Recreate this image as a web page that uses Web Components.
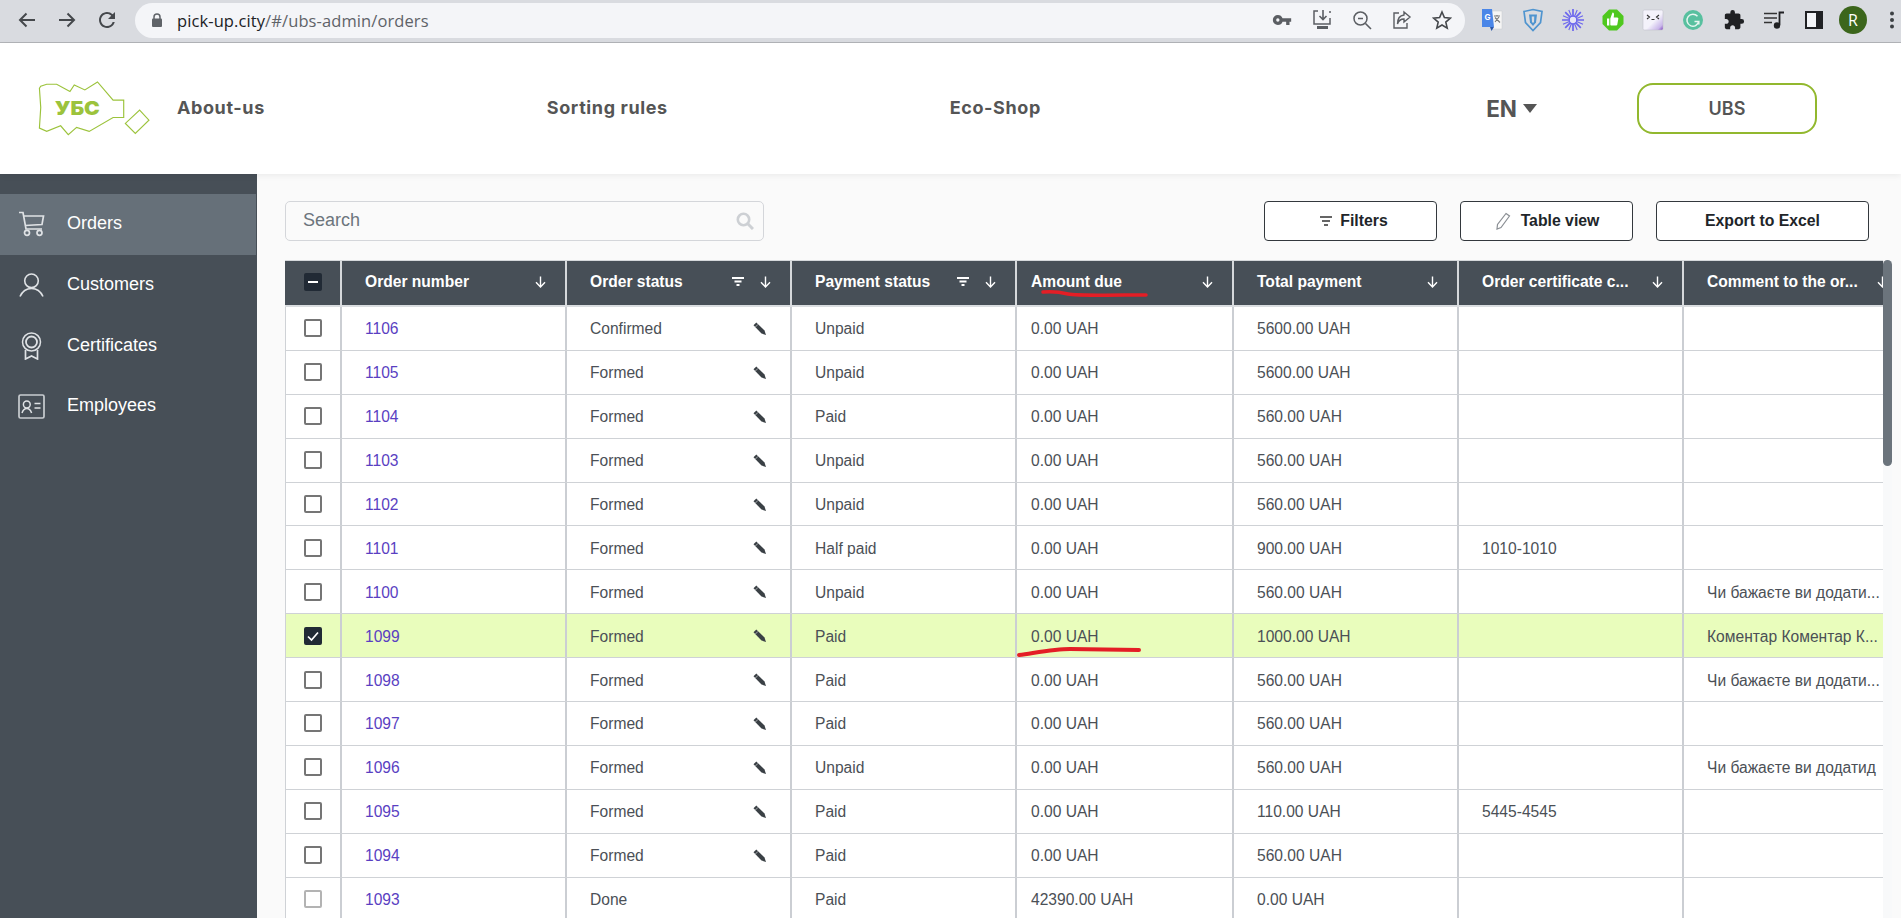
<!DOCTYPE html>
<html lang="en">
<head>
<meta charset="utf-8">
<title>UBS admin orders</title>
<style>
    html, body { margin: 0; height: 918px; overflow: hidden; background: #fafafa; }
    body { display: flex; flex-direction: column; font-family: "Liberation Sans", Arial, sans-serif; }
</style>
</head>
<body>
<browser-bar url-host="pick-up.city" url-path="/#/ubs-admin/orders"></browser-bar>
<site-header></site-header>
<admin-page>
    <side-nav slot="nav">
        <nav-item icon="cart" active>Orders</nav-item>
        <nav-item icon="user">Customers</nav-item>
        <nav-item icon="badge">Certificates</nav-item>
        <nav-item icon="card">Employees</nav-item>
    </side-nav>
    <order-toolbar>
        <search-box placeholder="Search"></search-box>
        <tool-button slot="actions" icon="lines">Filters</tool-button>
        <tool-button slot="actions" icon="pen">Table view</tool-button>
        <tool-button slot="actions" wide>Export to Excel</tool-button>
    </order-toolbar>
    <order-table></order-table>
</admin-page>

<script>
const svg = (w, h, box, body, extra = '') =>
    `<svg width="${w}" height="${h}" viewBox="${box}" fill="none" aria-hidden="true" ${extra}>${body}</svg>`;

// иконки браузера
const CHROME_ICONS = {
    back: svg(24, 24, '0 0 24 24', '<path d="M20 12H5M11.5 5.5 5 12l6.5 6.5" stroke="#45484c" stroke-width="2"/>'),
    forward: svg(24, 24, '0 0 24 24', '<path d="M4 12h15M12.5 5.5 19 12l-6.5 6.5" stroke="#45484c" stroke-width="2"/>'),
    reload: svg(24, 24, '0 0 24 24', '<path fill="#45484c" d="M17.65 6.35A7.958 7.958 0 0 0 12 4c-4.42 0-7.99 3.58-7.99 8s3.57 8 7.99 8c3.73 0 6.84-2.55 7.73-6h-2.08A5.99 5.99 0 0 1 12 18c-3.31 0-6-2.69-6-6s2.69-6 6-6c1.66 0 3.14.69 4.22 1.78L13 11h7V4l-2.35 2.35z"/>'),
    lock: svg(12, 14, '0 0 12 14', '<path d="M3 6V4a3 3 0 0 1 6 0v2" stroke="#5f6368" stroke-width="1.5"/><rect x="1" y="5.5" width="10" height="8.5" rx="1" fill="#5f6368"/>'),
    key: svg(20, 20, '0 0 24 24', '<path fill="#5b5e63" d="M12.65 10A6 6 0 0 0 7 6a6 6 0 0 0 0 12 6 6 0 0 0 5.65-4H17v4h4v-4h2v-4H12.65zM7 14a2 2 0 1 1 0-4 2 2 0 0 1 0 4z"/>'),
    install: svg(20, 22, '0 0 20 22', '<path d="M6 2H2v13h16V9M18 2v2" stroke="#5b5e63" stroke-width="1.5"/><path d="M11 1v9M7.5 7l3.5 3.5L14.500 7" stroke="#5b5e63" stroke-width="1.6"/><rect x="5" y="17" width="11" height="3" fill="#5b5e63"/>'),
    zoom: svg(20, 20, '0 0 20 20', '<circle cx="8.500" cy="8.500" r="6.500" stroke="#5b5e63" stroke-width="1.5"/><path d="M13.500 13.500 19 19M6 8.500h5" stroke="#5b5e63" stroke-width="1.6"/>'),
    share: svg(20, 20, '0 0 20 20', '<path d="M7 3H2v15h13v-5" stroke="#5b5e63" stroke-width="1.4"/><path d="M12 2l6 5-6 5V9C8 9 6.500 11 5.500 14 5.500 9 8 5.500 12 5z" stroke="#5b5e63" stroke-width="1.4"/>'),
    star: svg(20, 20, '0 0 20 20', '<path d="M10 2l2.400 5.600 6 .5-4.600 4 1.400 6L10 15l-5.200 3.100 1.400-6-4.600-4 6-.5z" stroke="#45484c" stroke-width="1.600"/>'),
    translate: svg(24, 26, '0 0 24 26', '<rect x="11" y="4" width="11" height="18" fill="#f5f5f5" stroke="#c8cacd" stroke-width=".5"/><path d="M14 9h6M17 8v1.500M15 15l4-5M15 10.500l5 5" stroke="#777" stroke-width="1.100"/><path d="M2 2h10l2 18H2z" fill="#4a86e8"/><path d="M10 20h4l-2.500 4z" fill="#2a56a8"/><text x="4.500" y="13" font-family="Inter, sans-serif" font-size="8" font-weight="700" fill="#fff">G</text>'),
    shield: svg(22, 24, '0 0 22 24', '<path d="M2 3.500 11 1.500l9 2-1.500 11L11 22.500 3.500 14.500z" stroke="#4f94cf" stroke-width="1.700"/><path d="M7 6.500h8l-1 8-3 3.500-3-3.500z" fill="#4f94cf"/><path d="M9.700 8.500h2.600l-.3 6h-2z" fill="#d9dbe0"/>'),
    sun: svg(22, 22, '0 0 22 22', '<g stroke="#6b66ee" stroke-width="1.700"><path d="M11 0v22M0 11h22M3.200 3.200l15.600 15.600M18.800 3.200 3.200 18.800"/><path d="M6.800 1l8.400 20M15.200 1 6.800 21M1 6.800l20 8.400M21 6.800 1 15.200" stroke-width="1.100"/></g><circle cx="11" cy="11" r="3.800" fill="#e6e6f6" stroke="#6b66ee" stroke-width="1.300"/>'),
    thumb: svg(22, 22, '0 0 22 22', '<path d="M7 .5h8L21.500 7v8L15 21.500H7L.5 15V7z" fill="#4fc81e"/><path d="M10.500 3.500c1.400 0 1.600 1 1.500 2.500l-.3 2.500h3.500c1 0 1.300.8 1.100 1.600l-1 5.400c-.2.800-.7 1-1.400 1H9.500c-.8 0-1.200-.4-1.200-1V9.500zM5 9.500h2.300V16.500H5z" fill="#fff"/>'),
    mail: svg(22, 22, '0 0 22 22', '<defs><linearGradient id="mailbg" x1="0" y1="0" x2="1" y2="1"><stop offset=".55" stop-color="#f4f2fb"/><stop offset=".85" stop-color="#c9b6ea"/><stop offset="1" stop-color="#7d3fc0"/></linearGradient></defs><rect x="1" y="1" width="20" height="20" rx="1.500" fill="url(#mailbg)" stroke="#c5c3cf" stroke-width=".6"/><path d="M5 6l2.500 2L5 10M17 6l-2.500 2 2.500 2M9.500 10.500h3" stroke="#333" stroke-width="1.100"/>'),
    grammarly: svg(22, 22, '0 0 22 22', '<circle cx="11" cy="11" r="10" fill="#58c09f"/><path d="M15.500 7.300A6 6 0 1 0 16.800 12.500H12.500M16.800 12.500v3" stroke="#e8f6f1" stroke-width="1.500"/>'),
    puzzle: svg(22, 22, '0 0 24 24', '<path fill="#202124" d="M20.500 11H19V7c0-1.100-.9-2-2-2h-4V3.500a2.500 2.500 0 0 0-5 0V5H4c-1.100 0-1.990.9-1.990 2v3.800H3.500c1.490 0 2.700 1.210 2.700 2.700s-1.210 2.700-2.700 2.700H2V20c0 1.100.9 2 2 2h3.800v-1.500c0-1.490 1.210-2.700 2.700-2.700s2.700 1.210 2.700 2.700V22H17c1.100 0 2-.9 2-2v-4h1.500a2.500 2.500 0 0 0 0-5z"/>'),
    music: svg(22, 20, '0 0 22 20', '<path d="M1 3.500h13M1 8h13M1 12.500h8" stroke="#333" stroke-width="1.700"/><path d="M16.500 15V2.500H21" stroke="#202124" stroke-width="1.800"/><circle cx="14" cy="15.500" r="3.200" fill="#202124"/>'),
    panel: svg(18, 18, '0 0 18 18', '<rect width="18" height="18" fill="#202124"/><rect x="2" y="2" width="9" height="14" fill="#f4f5f8"/>'),
    dots: svg(6, 18, '0 0 6 18', '<circle cx="3" cy="2.500" r="2" fill="#3c4043"/><circle cx="3" cy="9" r="2" fill="#3c4043"/><circle cx="3" cy="15.500" r="2" fill="#3c4043"/>'),
};

// иконки страницы
const PAGE_ICONS = {
    cart: svg(27, 26, '0 0 27 26', '<path d="M1 1.500h4l3 16.500h16M6 5h19.500l-1.500 8.500-17 1" stroke="#dfe2e5" stroke-width="1.700"/><circle cx="9" cy="21.800" r="2.500" stroke="#dfe2e5" stroke-width="1.700"/><circle cx="21.500" cy="21.800" r="2.500" stroke="#dfe2e5" stroke-width="1.700"/>'),
    user: svg(25, 24, '0 0 25 24', '<circle cx="12.500" cy="7.800" r="6.800" stroke="#dfe2e5" stroke-width="1.600"/><path d="M1 23.500c2.500-5.500 6.500-8 11.500-8s9 2.500 11.500 8" stroke="#dfe2e5" stroke-width="1.600"/>'),
    badge: svg(21, 28, '0 0 21 28', '<circle cx="10.500" cy="10" r="9" stroke="#dfe2e5" stroke-width="1.500"/><circle cx="10.500" cy="10" r="5.500" stroke="#dfe2e5" stroke-width="1.800"/><path d="M4.500 18v9l6-3 6 3v-9" stroke="#dfe2e5" stroke-width="1.700"/>'),
    card: svg(27, 25, '0 0 27 25', '<rect x="1" y="1" width="25" height="23" rx="1.500" stroke="#c9cdd1" stroke-width="1.700"/><circle cx="8.800" cy="10.500" r="3.400" stroke="#dfe2e5" stroke-width="1.500"/><path d="M4 19c1-3 3-4.500 4.800-4.500S12.600 16 13.600 19M16.500 9.500h6M16.500 14h6" stroke="#dfe2e5" stroke-width="1.500"/>'),
    lines: svg(12, 10, '0 0 12 10', '<path d="M0 1h12M2 5h8M4 9h4" stroke="#333" stroke-width="1.300"/>'),
    pen: svg(16, 18, '0 0 16 18', '<path d="M11 1.500l3.500 2.500-8.500 11.500L2 17l.5-4.500z" stroke="#8b8f94" stroke-width="1.200"/>'),
    search: svg(18, 18, '0 0 18 18', '<circle cx="7.500" cy="7.500" r="5.700" stroke="#cdd0d4" stroke-width="2.600"/><path d="M11.800 11.800 17 17" stroke="#cdd0d4" stroke-width="3"/>'),
    arrow: svg(11, 12, '0 0 11 12', '<path d="M5.500 .5v10.500M1 6.200 5.500 11 10 6.200" stroke="#fff" stroke-width="1.400"/>'),
    filter: svg(12, 9, '0 0 12 9', '<path d="M0 1h12M2.500 4.500h7M4.500 8h3" stroke="#fff" stroke-width="1.800"/>'),
    pencil: svg(13, 13, '0 0 13 13', '<path d="M.5 3.300 3.300 .5l8.200 8L13 13l-4.500-1.500z" fill="#3a4045"/><path d="M2.300 5.100 5.100 2.300" stroke="#d8dadc" stroke-width=".7"/>'),
};

class BrowserBar extends HTMLElement {
    connectedCallback() {
        const ic = (name, cls = 'ext') => `<span class="${cls}">${CHROME_ICONS[name]}</span>`;
        this.attachShadow({ mode: 'open' }).innerHTML = `
<style>
    :host {
        display: flex;
        align-items: center;
        flex: none;
        box-sizing: border-box;
        height: 43px;
        padding: 0 6px 2px 7px;
        background: #d9dbe0;
        border-bottom: 1px solid #b2b4b8;
    }
    .nav { width: 40px; display: flex; justify-content: center; }
    .omni {
        flex: 1;
        height: 35px;
        margin-left: 8px;
        display: flex;
        align-items: center;
        padding-left: 16px;
        background: #f4f5f8;
        border-radius: 18px;
    }
    .url { margin-left: 14px; font: 16.500px "Open Sans", sans-serif; color: #5f6368; letter-spacing: .1px; white-space: nowrap; }
    .url b { font-weight: 400; color: #202124; }
    .tools { margin-left: auto; display: flex; padding-right: 3px; }
    .tool { width: 40px; display: flex; justify-content: center; align-items: center; }
    .exts { display: flex; align-items: center; padding-left: 7px; }
    .ext { width: 40.200px; display: flex; justify-content: center; align-items: center; }
    .avatar {
        width: 28px; height: 28px; margin: 0 22px 0 5px;
        border-radius: 50%;
        background: #3c661c;
        color: #fff;
        font: 16px "Open Sans", sans-serif;
        display: flex; align-items: center; justify-content: center;
    }
</style>
${ic('back', 'nav')}${ic('forward', 'nav')}${ic('reload', 'nav')}
<div class="omni">
    ${CHROME_ICONS.lock}
    <span class="url"><b>${this.getAttribute('url-host')}</b>${this.getAttribute('url-path')}</span>
    <div class="tools">${ic('key', 'tool')}${ic('install', 'tool')}${ic('zoom', 'tool')}${ic('share', 'tool')}${ic('star', 'tool')}</div>
</div>
<div class="exts">
    ${ic('translate')}${ic('shield')}${ic('sun')}${ic('thumb')}${ic('mail')}${ic('grammarly')}${ic('puzzle')}${ic('music')}${ic('panel')}
    <span class="avatar">R</span>
    ${CHROME_ICONS.dots}
</div>`;
    }
}
customElements.define('browser-bar', BrowserBar);

const headerTemplate = document.createElement('template');
headerTemplate.innerHTML = `
<style>
    :host {
        display: flex;
        align-items: center;
        flex: none;
        position: relative;
        z-index: 2;
        box-sizing: border-box;
        height: 131px;
        padding: 0 84px 0 30px;
        background: #fff;
        box-shadow: 0 2px 6px rgba(0, 0, 0, .06);
        color: #555;
        font-family: Inter, sans-serif;
        font-weight: 600;
    }
    .logo { display: block; flex: none; margin-right: 17px; }
    nav { display: flex; gap: 282px; padding-bottom: 2px; font-size: 18px; font-weight: 700; letter-spacing: .6px; }
    .right { margin-left: auto; display: flex; align-items: center; gap: 100px; }
    .lang { display: flex; align-items: center; gap: 6px; font-size: 22.500px; font-weight: 700; }
    .lang i { width: 0; height: 0; border: 7.500px solid transparent; border-top: 9px solid #555; border-bottom: 0; }
    .ubs {
        box-sizing: border-box;
        width: 180px; height: 51px;
        display: flex; align-items: center; justify-content: center;
        border: 2px solid #92b82e;
        border-radius: 16px;
        font-size: 18px;
    }
</style>
<svg class="logo" width="130" height="75" viewBox="0 0 391 226" fill="none">
    <path d="M28 52 32 46 50 40 80 40 120 62 133 42 165 57 203 33 250 88 282 88 282 140 250 140 178 182 140 170 115 192 92 165 50 182 28 172 32 110Z" stroke="#9cc33c" stroke-width="3.500"/>
    <path d="M330 118 358 148 317 188 287 158Z" stroke="#9cc33c" stroke-width="3.500"/>
    <text x="74" y="133" font-family="Inter, sans-serif" font-size="58" font-weight="900" fill="#9cc33c" textLength="136" lengthAdjust="spacingAndGlyphs">УБС</text>
</svg>
<nav><span>About-us</span><span>Sorting rules</span><span>Eco-Shop</span></nav>
<div class="right">
    <div class="lang">EN<i></i></div>
    <div class="ubs">UBS</div>
</div>`;

class SiteHeader extends HTMLElement {
    constructor() {
        super();
        this.attachShadow({ mode: 'open' });
        this.shadowRoot.appendChild(headerTemplate.content.cloneNode(true));
    }
}
customElements.define('site-header', SiteHeader);

const pageTemplate = document.createElement('template');
pageTemplate.innerHTML = `
<style>
    :host { display: flex; flex: 1; min-height: 0; }
    main {
        flex: 1;
        min-width: 0;
        box-sizing: border-box;
        padding: 27px 9px 0 28px;
        display: flex;
        flex-direction: column;
        gap: 19px;
        overflow: hidden;
    }
</style>
<slot name="nav"></slot>
<main><slot></slot></main>`;

class AdminPage extends HTMLElement {
    constructor() {
        super();
        this.attachShadow({ mode: 'open' });
        this.shadowRoot.appendChild(pageTemplate.content.cloneNode(true));
    }
}
customElements.define('admin-page', AdminPage);

class SideNav extends HTMLElement {
    constructor() {
        super();
        this.attachShadow({ mode: 'open' }).innerHTML = `
<style>
    :host {
        display: flex;
        flex-direction: column;
        flex: none;
        box-sizing: border-box;
        width: 257px;
        padding: 20px 1px 0 0;
        background: #474f57;
    }
</style>
<slot></slot>`;
    }
}
customElements.define('side-nav', SideNav);

class NavItem extends HTMLElement {
    constructor() {
        super();
        this.attachShadow({ mode: 'open' }).innerHTML = `
<style>
    :host {
        display: flex;
        align-items: center;
        height: 60.700px;
        padding-left: 16px;
        color: #fff;
        font-size: 18px;
    }
    :host([active]) { background: #667079; }
    .icon { width: 30px; margin-right: 21px; display: flex; justify-content: center; }
    .text { padding-bottom: 1px; }
</style>
<span class="icon">${PAGE_ICONS[this.getAttribute('icon')]}</span>
<span class="text"><slot></slot></span>`;
    }
}
customElements.define('nav-item', NavItem);

class OrderToolbar extends HTMLElement {
    constructor() {
        super();
        this.attachShadow({ mode: 'open' }).innerHTML = `
<style>
    :host { display: flex; flex: none; height: 40px; width: 1584px; }
    .actions { margin-left: auto; display: flex; gap: 23px; }
</style>
<slot></slot>
<div class="actions"><slot name="actions"></slot></div>`;
    }
}
customElements.define('order-toolbar', OrderToolbar);

class SearchBox extends HTMLElement {
    constructor() {
        super();
        this.attachShadow({ mode: 'open' }).innerHTML = `
<style>
    :host {
        display: flex;
        align-items: center;
        justify-content: space-between;
        box-sizing: border-box;
        width: 479px;
        padding: 0 9px 0 17px;
        border: 1px solid #d4d6da;
        border-radius: 5px;
        font-size: 18px;
        color: #6c757d;
    }
    span { padding-bottom: 2px; }
</style>
<span>${this.getAttribute('placeholder')}</span>${PAGE_ICONS.search}`;
    }
}
customElements.define('search-box', SearchBox);

class ToolButton extends HTMLElement {
    constructor() {
        super();
        const icon = PAGE_ICONS[this.getAttribute('icon')] || '';
        this.attachShadow({ mode: 'open' }).innerHTML = `
<style>
    :host {
        display: flex;
        align-items: center;
        justify-content: center;
        gap: 8px;
        box-sizing: border-box;
        width: 173px;
        padding-bottom: 1px;
        background: #fff;
        border: 1px solid #33383d;
        border-radius: 4px;
        font-size: 15.800px;
        font-weight: 700;
        color: #212529;
    }
    :host([wide]) { width: 213px; }
    :host([icon="lines"]) { padding-left: 7px; }
    :host([icon="pen"]) { gap: 10px; padding-left: 1px; }
</style>
${icon}<slot></slot>`;
    }
}
customElements.define('tool-button', ToolButton);

const COLUMNS = '55px 225px 225px 225px 217px 225px 225px 225px';

class OrderRow extends HTMLElement {
    set data(row) {
        const cell = (text, cls = '') => `<div class="cell ${cls}"><span>${text}</span></div>`;
        const pencil = row.done ? '' : PAGE_ICONS.pencil;
        this.shadowRoot.innerHTML = `
<style>
    :host {
        display: grid;
        grid-template-columns: ${COLUMNS};
        box-sizing: border-box;
        height: 43.900px;
        background: #fff;
        border-bottom: 1px solid #cfd2d6;
        color: #4b5056;
        font-size: 15.600px;
    }
    :host([selected]) { background: #e9fdbc; }
    .cell {
        display: flex;
        align-items: center;
        justify-content: space-between;
        padding: 0 18px 0 23px;
        border-left: 2px solid #cbced3;
        white-space: nowrap;
        overflow: hidden;
    }
    .cell span { padding-top: 2px; }
    .box { justify-content: center; padding: 0; border-left: 1px solid #cfd2d6; }
    .num { color: #5a3fc2; }
    .due { padding-left: 14px; }
    .st { padding-right: 24px; }
    .check {
        box-sizing: border-box;
        width: 18px; height: 18px;
        background: #fff;
        border: 2px solid #757575;
        border-radius: 2px;
    }
    .check.dim { border-color: #b3b3b3; }
    .check.on { background: #212a35; border-color: #212a35; }
    .check svg { display: block; }
</style>
<div class="cell box"><div class="check ${row.selected ? 'on' : ''} ${row.done ? 'dim' : ''}">${row.selected ? svg(14, 14, '0 0 14 14', '<path d="M2 7.500 5.500 11 12 3.500" stroke="#fff" stroke-width="1.700"/>') : ''}</div></div>
${cell(row.id, 'num')}
<div class="cell st"><span>${row.status}</span>${pencil}</div>
${cell(row.pay)}
${cell(row.due || '0.00 UAH', 'due')}
${cell(row.total)}
${cell(row.cert || '')}
${cell(row.note || '')}`;
        if (row.selected) this.setAttribute('selected', '');
    }

    constructor() {
        super();
        this.attachShadow({ mode: 'open' });
    }
}
customElements.define('order-row', OrderRow);

const HEADS = [
    { text: 'Order number' },
    { text: 'Order status', filter: true },
    { text: 'Payment status', filter: true },
    { text: 'Amount due', cls: 'due' },
    { text: 'Total payment' },
    { text: 'Order certificate c...' },
    { text: 'Comment to the or...' },
];

const WISH = 'Чи бажаєте ви додати...';
const ORDERS = [
    { id: 1106, status: 'Confirmed', pay: 'Unpaid', total: '5600.00 UAH' },
    { id: 1105, status: 'Formed', pay: 'Unpaid', total: '5600.00 UAH' },
    { id: 1104, status: 'Formed', pay: 'Paid', total: '560.00 UAH' },
    { id: 1103, status: 'Formed', pay: 'Unpaid', total: '560.00 UAH' },
    { id: 1102, status: 'Formed', pay: 'Unpaid', total: '560.00 UAH' },
    { id: 1101, status: 'Formed', pay: 'Half paid', total: '900.00 UAH', cert: '1010-1010' },
    { id: 1100, status: 'Formed', pay: 'Unpaid', total: '560.00 UAH', note: WISH },
    { id: 1099, status: 'Formed', pay: 'Paid', total: '1000.00 UAH', note: 'Коментар Коментар К...', selected: true },
    { id: 1098, status: 'Formed', pay: 'Paid', total: '560.00 UAH', note: WISH },
    { id: 1097, status: 'Formed', pay: 'Paid', total: '560.00 UAH' },
    { id: 1096, status: 'Formed', pay: 'Unpaid', total: '560.00 UAH', note: 'Чи бажаєте ви додатид' },
    { id: 1095, status: 'Formed', pay: 'Paid', total: '110.00 UAH', cert: '5445-4545' },
    { id: 1094, status: 'Formed', pay: 'Paid', total: '560.00 UAH' },
    { id: 1093, status: 'Done', pay: 'Paid', due: '42390.00 UAH', total: '0.00 UAH', done: true },
];

class OrderTable extends HTMLElement {
    constructor() {
        super();
        const heads = HEADS.map(h => `
<div class="th ${h.cls || ''}">
    <span class="label">${h.text}</span>
    ${h.filter ? `<span class="filter">${PAGE_ICONS.filter}</span>` : ''}
    <span class="sort">${PAGE_ICONS.arrow}</span>
</div>`).join('');
        this.attachShadow({ mode: 'open' }).innerHTML = `
<style>
    :host {
        display: flex;
        flex: 1;
        min-height: 0;
        position: relative;
        width: 1607px;
    }
    .table { width: 1598px; flex: none; overflow: hidden; }
    .head {
        display: grid;
        grid-template-columns: ${COLUMNS};
        box-sizing: border-box;
        height: 47px;
        background: #474f57;
        border-top: 1px solid #d5d8db;
        border-bottom: 2px solid #dadde0;
        color: #fff;
        font-size: 15.600px;
        font-weight: 700;
    }
    .th {
        display: flex;
        align-items: center;
        padding: 0 19px 3px 23px;
        border-left: 2px solid #d5d8db;
        white-space: nowrap;
        overflow: hidden;
    }
    .th.due { padding-left: 14px; }
    .th.corner { justify-content: center; padding: 0 0 2px; border-left: 0; }
    .label { margin-right: auto; }
    .filter { margin-right: 16px; }
    .filter, .sort { display: flex; flex: none; }
    .mini {
        box-sizing: border-box;
        width: 18px; height: 18px;
        background: #212a35;
        border-radius: 2px;
        display: flex; align-items: center; justify-content: center;
    }
    .mini i { width: 10px; height: 2px; background: #fff; }
    .track { width: 9px; flex: none; background: #f8f9fa; }
    .thumb { height: 206px; background: #6b747c; border-radius: 5px; }
    .marks { position: absolute; left: 0; top: 0; pointer-events: none; }
</style>
<div class="table">
    <div class="head">
        <div class="th corner"><div class="mini"><i></i></div></div>
        ${heads}
    </div>
    <div class="rows"></div>
</div>
<div class="track"><div class="thumb"></div></div>
<svg class="marks" width="1598" height="658" viewBox="285 260 1598 658" fill="none" stroke="#e41e26" stroke-linecap="round">
    <path d="M1043 292C1052 291 1060 292 1068 294S1120 295 1146 295" stroke-width="3.500"/>
    <path d="M1019 655C1040 652 1055 649 1070 649L1139 650" stroke-width="4"/>
</svg>`;
        const rows = this.shadowRoot.querySelector('.rows');
        for (const order of ORDERS) {
            const row = document.createElement('order-row');
            row.data = order;
            rows.appendChild(row);
        }
    }
}
customElements.define('order-table', OrderTable);
</script>
</body>
</html>
